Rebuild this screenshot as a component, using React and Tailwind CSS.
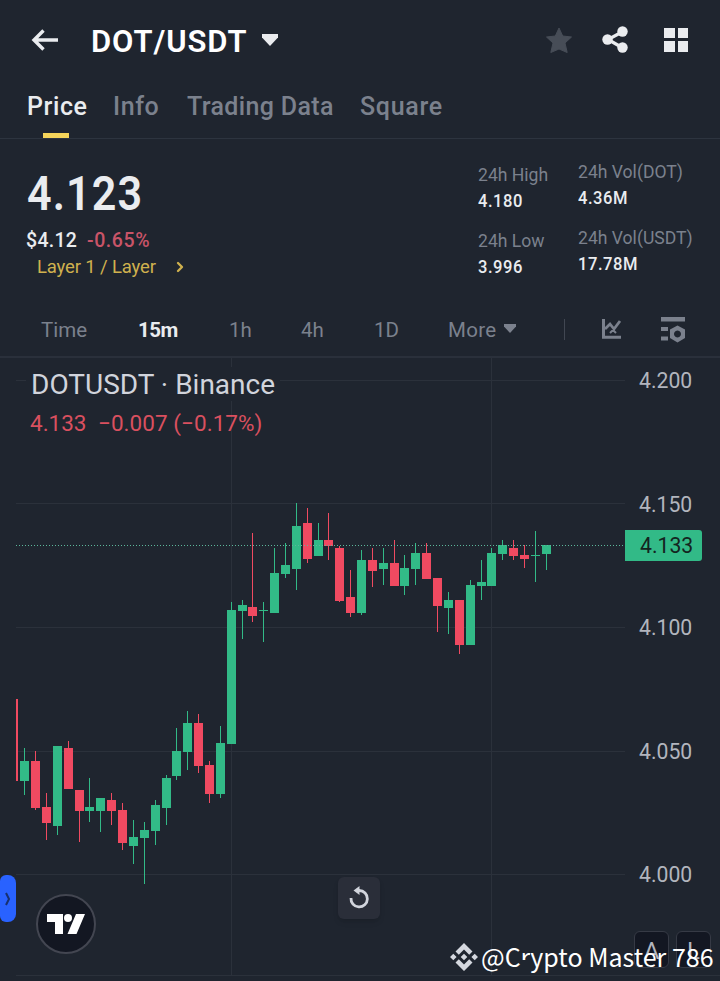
import { ChevronRight } from 'lucide-react'

const UP = '#32ba87'
const DOWN = '#f04a61'

// x, body top, body bottom, wick top, wick bottom, direction
const candles = [
    [20, 761, 781, 748, 795, 1],
    [31, 761, 808, 751, 810, 0],
    [42, 807, 823, 793, 840, 0],
    [53, 746, 826, 746, 835, 1],
    [64, 748, 789, 741, 789, 0],
    [75, 790, 811, 790, 842, 0],
    [85, 807, 811, 778, 822, 1],
    [96, 798, 811, 798, 832, 1],
    [107, 800, 811, 793, 825, 0],
    [118, 810, 843, 803, 850, 0],
    [129, 837, 846, 820, 864, 1],
    [140, 830, 838, 822, 884, 1],
    [151, 805, 831, 800, 845, 1],
    [162, 778, 808, 775, 825, 1],
    [172, 751, 776, 728, 780, 1],
    [183, 723, 752, 711, 770, 1],
    [194, 723, 766, 714, 773, 0],
    [205, 765, 794, 761, 803, 0],
    [216, 743, 794, 726, 798, 1],
    [227, 610, 744, 602, 744, 1],
    [238, 605, 611, 600, 639, 1],
    [248, 607, 616, 533, 622, 0],
    [259, 610, 611, 602, 642, 1],
    [270, 573, 613, 548, 613, 1],
    [281, 565, 574, 543, 578, 1],
    [292, 526, 569, 503, 590, 1],
    [303, 523, 559, 508, 563, 0],
    [314, 540, 556, 523, 556, 1],
    [324, 540, 546, 513, 560, 0],
    [335, 548, 601, 546, 602, 0],
    [346, 597, 613, 570, 617, 0],
    [357, 560, 613, 550, 615, 1],
    [368, 560, 571, 548, 587, 0],
    [379, 563, 569, 548, 585, 1],
    [390, 563, 586, 540, 586, 0],
    [400, 568, 586, 555, 595, 1],
    [411, 553, 569, 543, 585, 1],
    [422, 553, 579, 543, 579, 0],
    [433, 578, 606, 578, 632, 0],
    [444, 600, 608, 592, 634, 1],
    [455, 600, 645, 600, 654, 0],
    [466, 585, 645, 580, 645, 1],
    [477, 582, 586, 560, 600, 1],
    [487, 553, 586, 548, 586, 1],
    [498, 545, 554, 540, 560, 1],
    [509, 548, 556, 540, 560, 0],
    [520, 555, 559, 545, 568, 0],
    [531, 555, 556, 531, 582, 1],
    [542, 545, 554, 545, 570, 1],
]

const stats = [
    [['24h High', '4.180'], ['24h Low', '3.996']],
    [['24h Vol(DOT)', '4.36M'], ['24h Vol(USDT)', '17.78M']],
]

function Header() {
    return (
        <header className="flex h-20 items-center pl-[31px] pr-[31px]">
            <svg width="28" height="22" viewBox="0 0 28 22" fill="none" stroke="#eaecef" strokeWidth="3.4" className="shrink-0">
                <path d="M12.500 1.500L3 11l9.500 9.500M3 11h24" />
            </svg>
            <h1 className="ml-8 w-[156px] whitespace-nowrap pt-[3px] text-[31px] leading-9 font-semibold tracking-[0.9px] text-white">DOT/USDT</h1>
            <svg width="18" height="14" viewBox="0 0 18 14" className="ml-[14px]">
                <path d="M1 1h16v3.500L9 13 1 4.500z" fill="#eaecef" />
            </svg>
            <div className="ml-auto flex items-center">
                <svg width="28" height="28" viewBox="0 0 28 28">
                    <path d="M13 2l3.700 8 8.800 1-6.500 6 2.200 9.500L13 23l-8.200 3.500L7 17l-6.500-6 8.800-1z" fill="#474d57" stroke="#474d57" strokeLinejoin="round" />
                </svg>
                <svg width="26" height="28" viewBox="0 0 26 28" className="ml-[28px]" fill="#eaecef">
                    <path d="M20 6L6 13.500l14 8" fill="none" stroke="#eaecef" strokeWidth="3.200" />
                    <circle cx="5.500" cy="13.500" r="5.200" />
                    <circle cx="20.500" cy="5.500" r="5.200" />
                    <circle cx="20.500" cy="21.500" r="5.200" />
                </svg>
                <div className="ml-9 mr-px mb-px grid grid-cols-2 gap-[3px]">
                    {[0, 1, 2, 3].map(i => <span key={i} className="size-[10.5px] bg-[#eaecef]" />)}
                </div>
            </div>
        </header>
    )
}

function Tabs() {
    return (
        <nav className="flex h-[59px] items-start gap-[27px] border-b border-[#2d343f] pt-[11px] pl-[27px] text-[25px] leading-8 font-medium tracking-[0.6px] text-[#7b818d]">
            <div className="flex w-[59px] flex-col items-start text-[#eaecef]">
                Price
                <span className="mt-[10px] ml-4 h-[5px] w-[26px] bg-[#f5d45a]" />
            </div>
            <span className="w-[47px]">Info</span>
            <span className="w-[146px] whitespace-nowrap tracking-[0.35px]">Trading Data</span>
            <span className="tracking-[0.7px]">Square</span>
        </nav>
    )
}

function Summary() {
    return (
        <section className="flex h-[163px] pl-[27px]">
            <div className="w-[451px]">
                <div className="mt-[30px] origin-left scale-x-[0.88] text-[49px] leading-[50px] font-semibold tracking-[1.2px] text-[#eaecef]">4.123</div>
                <div className="mt-[7px] -ml-px flex gap-[10px] text-[21px] leading-7 font-medium">
                    <span className="w-[51px] origin-left scale-x-[0.93] tracking-[0.3px] text-[#eaecef]">$4.12</span>
                    <span className="origin-left scale-x-[0.93] tracking-[0.6px] text-[#c95468]">-0.65%</span>
                </div>
                <div className="ml-[10px] flex items-center text-[18.5px] leading-[26px] text-[#cfb14e]">
                    <span className="w-[135px] tracking-[-0.15px]">Layer 1 / Layer</span>
                    <ChevronRight className="size-4" strokeWidth={3.5} />
                </div>
            </div>
            {stats.map((column, i) => (
                <div key={i} className={i === 0 ? 'w-[100px] pt-[24px]' : 'pt-[21px]'}>
                    {column.map(([label, value]) => (
                        <div key={label} className="h-[66px] whitespace-nowrap">
                            <div className="origin-left scale-x-[0.95] text-[18.5px] leading-6 text-[#7b818d]">{label}</div>
                            <div className="mt-[2px] origin-left scale-x-[0.92] text-[18px] leading-6 font-medium tracking-[0.6px] text-[#eaecef]">{value}</div>
                        </div>
                    ))}
                </div>
            ))}
        </section>
    )
}

function Intervals() {
    return (
        <nav className="flex h-[56px] items-center border-b-2 border-[#2a303b] pt-[3px] pl-[41px] text-[20.5px] text-[#7b818d]">
            <span className="w-[97px]">Time</span>
            <span className="w-[91px] font-bold tracking-[-0.5px] text-[#eaecef]">15m</span>
            <span className="w-[72px]">1h</span>
            <span className="w-[73px]">4h</span>
            <span className="w-[74px]">1D</span>
            <span className="w-[56px] tracking-[0.3px]">More</span>
            <svg width="12" height="9" viewBox="0 0 12 9" className="mb-1">
                <path d="M0 0h12v2.500L6 9 0 2.500z" fill="#7b818d" />
            </svg>
            <span className="mb-[2px] ml-[48px] h-[21px] w-px bg-[#414752]" />
            <svg width="20" height="20" viewBox="0 0 20 20" fill="none" stroke="#7b818d" className="mb-[3px] ml-[37px]">
                <path d="M1.500 0v18.300H19" strokeWidth="3" />
                <path d="M3 10l5-5 4 5 6-8" strokeWidth="2.800" />
                <path d="M8 14l2-2h2l2 2" strokeWidth="2" />
            </svg>
            <svg width="26" height="26" viewBox="0 0 26 26" fill="#7b818d" className="mb-px ml-[38px]">
                <path d="M1 0h24v4.500H1zM1 10h7v4H1zM1 19.500h7v4H1z" />
                <path fillRule="evenodd" d="M17.500 8.500l7.500 4v8.500l-7.500 4.500-7.500-4.500v-8.500zM17.500 13.500a3.500 3.500 0 1 0 .01 0z" />
            </svg>
        </nav>
    )
}

function Chart() {
    return (
        <main className="relative h-[623px]">
            {/* plot, in page coordinates */}
            <svg width="720" height="623" viewBox="0 358 720 623" className="block" shapeRendering="crispEdges">
                <g fill="#2b313b">
                    {[380, 503, 627, 751, 874, 975].map(y => <rect key={y} x="16" y={y} width="609" height="1" />)}
                    <rect x="231" y="358" width="1" height="618" />
                    <rect x="491" y="358" width="1" height="618" />
                    <rect x="625" y="975" width="95" height="1" />
                </g>
                <rect x="16" y="699" width="2" height="82" fill={DOWN} />
                {candles.map(([x, top, bottom, high, low, up]) => (
                    <g key={x} fill={up ? UP : DOWN}>
                        <rect x={x + 4} y={high} width="1" height={low - high} />
                        <rect x={x} y={top} width="9" height={bottom - top} />
                    </g>
                ))}
                <path d="M16 545.500H625" stroke="#5cb79b" strokeDasharray="1 2" />
            </svg>

            <div className="absolute top-[9px] left-[26px] bg-[#1f252f] px-[5px] pt-0.5 whitespace-nowrap">
                <div className="text-[28px] leading-8 text-[#d1d4dc]">DOTUSDT · Binance</div>
            </div>
            <div className="absolute top-[51px] left-[30px] flex gap-3 text-[22.5px] leading-7 whitespace-nowrap text-[#d9505f]">
                <span className="w-14">4.133</span>
                <span className="tracking-[0.05px]">−0.007 (−0.17%)</span>
            </div>

            {/* price scale */}
            <div className="absolute top-[9px] left-[639px] flex flex-col text-[21.2px] leading-7 text-[#b2b5be]">
                {['4.200', '4.150', '4.100', '4.050', '4.000'].map(p => <span key={p} className="h-[123.5px]">{p}</span>)}
            </div>
            <div className="absolute top-[172px] left-[625px] h-[31px] w-[77px] rounded-r-[3px] bg-[#32ba87] pl-[15px] text-[21.2px] leading-8 text-[#14251f]">4.133</div>

            <div className="absolute top-[517px] left-0 flex h-[47px] w-4 items-center justify-center rounded-r-lg rounded-l-md bg-[#2962ff]">
                <svg width="6" height="14" viewBox="0 0 6 14" fill="none" stroke="#17306f" strokeWidth="2"><path d="M1 1l3 6-3 6" /></svg>
            </div>

            <div className="absolute top-[536px] left-[36px] flex size-[60px] items-center justify-center rounded-full border-2 border-[#434651] bg-[#131722]">
                <svg width="38" height="20" viewBox="0 0 38 20" fill="#fff">
                    <path d="M0 0h16v20H8V8H0zM29 0h9l-8.500 20h-9z" />
                    <circle cx="21" cy="4" r="4" />
                </svg>
            </div>

            <button className="absolute top-[519px] left-[338px] flex size-[42px] items-center justify-center rounded-md bg-[#2a2e39] shadow-md">
                <svg width="22" height="24" viewBox="0 0 22 24" fill="none" stroke="#d1d4dc" strokeWidth="2.800">
                    <path d="M3 12a8.200 8.200 0 1 0 8.200-7.500H8" />
                    <path d="M11.500 0v9L5.500 4.500z" fill="#d1d4dc" stroke="none" />
                </svg>
            </button>

            <div className="absolute top-[573px] left-[634px] flex gap-[7px] text-[24px] leading-[38px] text-[#b2b5be]">
                <span className="h-[37px] w-[35px] rounded-md border border-[#363a45] bg-[#131722] text-center">A</span>
                <span className="h-[37px] w-[35px] rounded-md border border-[#363a45] bg-[#131722] text-center">L</span>
            </div>

            <div className="absolute top-[582px] left-[450px] flex items-center whitespace-nowrap text-white">
                <svg width="28" height="28" viewBox="0 0 28 28" fill="#d5d8df" className="mt-[2px]">
                    <path d="M14 0l8.500 8.500-3.300 3.300L14 6.600l-5.200 5.200-3.300-3.300zM14 28l8.500-8.500-3.300-3.300L14 21.400l-5.200-5.200-3.300 3.300zM14 10.700l3.300 3.300-3.300 3.300-3.300-3.300zM3.300 10.700L6.600 14l-3.300 3.300L0 14zM24.700 10.700L28 14l-3.300 3.300-3.300-3.300z" />
                </svg>
                <span className="ml-[3px] font-['Noto_Sans_CJK_SC',sans-serif] text-[25px] leading-8">@C<span className="inline-block [clip-path:inset(12px_0_12px_0)]">r</span>ypto Master 786</span>
            </div>
        </main>
    )
}

export default function App() {
    return (
        <div className="h-[981px] w-[720px] overflow-hidden bg-[#1f252f] font-['Roboto',sans-serif]">
            <Header />
            <Tabs />
            <Summary />
            <Intervals />
            <Chart />
        </div>
    )
}
